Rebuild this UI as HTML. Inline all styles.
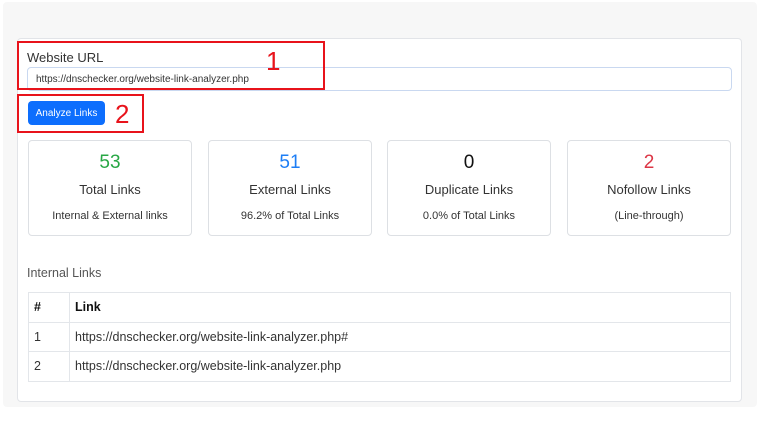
<!DOCTYPE html>
<html><head><style>
*{box-sizing:border-box;margin:0;padding:0}
body{width:768px;height:434px;background:#fff;font-family:"Liberation Sans",sans-serif;color:#333;position:relative;overflow:hidden}
.abs{position:absolute}
.outer{left:3px;top:2px;width:754px;height:405px;background:#f7f7f7;border-radius:4px}
.card{left:17px;top:38px;width:725px;height:364px;background:#fff;border:1px solid #e2e4e8;border-radius:4px}
.red{border:2px solid #e8131b}
.input{left:27px;top:67px;width:705px;height:24px;border:1px solid #c9d8f0;border-radius:4px;font-size:10px;padding:6px 8px;color:#333}
.btn{left:28px;top:101px;width:77px;height:24px;background:#0d6efd;color:#fff;border-radius:4px;font-size:10px;text-align:center;line-height:25px}
.stat{top:140px;width:164px;height:96px;border:1px solid #dde0e4;border-radius:4px;text-align:center;background:#fff}
.stat .n{position:absolute;top:11px;width:100%;font-size:19px}
.stat .t{position:absolute;top:41px;width:100%;font-size:13px;color:#333}
.stat .s{position:absolute;top:69px;width:100%;font-size:11px;color:#333}
table{position:absolute;left:28px;top:292px;width:703px;border-collapse:collapse;font-size:12.5px;color:#333}
td,th{border:1px solid #e3e6ea;height:29.5px;padding:0 5px;text-align:left}
th{font-weight:bold;color:#111}
td:first-child,th:first-child{width:41px}
</style></head><body>
<div class="abs outer"></div>
<div class="abs card"></div>
<div class="abs" style="left:27px;top:50px;font-size:13px;color:#333">Website URL</div>
<div class="abs input">https://dnschecker.org/website-link-analyzer.php</div>
<div class="abs btn">Analyze Links</div>
<div class="abs red" style="left:17px;top:41px;width:308px;height:49px"></div>
<div class="abs red" style="left:17px;top:94px;width:127px;height:39px"></div>
<div class="abs" style="left:266px;top:46px;font-size:26px;color:#e8131b">1</div>
<div class="abs" style="left:115px;top:99px;font-size:26px;color:#e8131b">2</div>
<div class="abs stat" style="left:28px"><div class="n" style="color:#28a745">53</div><div class="t">Total Links</div><div class="s">Internal &amp; External links</div></div>
<div class="abs stat" style="left:208px"><div class="n" style="color:#1e7ef5">51</div><div class="t">External Links</div><div class="s">96.2% of Total Links</div></div>
<div class="abs stat" style="left:387px"><div class="n" style="color:#111">0</div><div class="t">Duplicate Links</div><div class="s">0.0% of Total Links</div></div>
<div class="abs stat" style="left:567px"><div class="n" style="color:#dc3545">2</div><div class="t">Nofollow Links</div><div class="s">(Line-through)</div></div>
<div class="abs" style="left:27px;top:266px;font-size:12.5px;color:#555">Internal Links</div>
<table>
<tr><th>#</th><th>Link</th></tr>
<tr><td>1</td><td>https://dnschecker.org/website-link-analyzer.php#</td></tr>
<tr><td>2</td><td>https://dnschecker.org/website-link-analyzer.php</td></tr>
</table>
</body></html>
